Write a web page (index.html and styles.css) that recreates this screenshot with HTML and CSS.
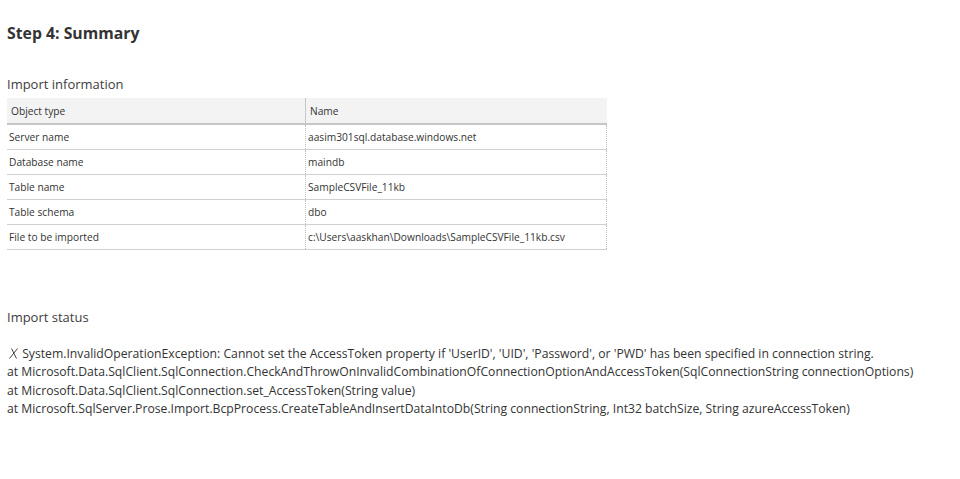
FILE: index.html
```html
<!DOCTYPE html>
<html>
<head>
<meta charset="utf-8">
<link rel="stylesheet" href="styles.css">
</head>
<body>
<div class="page">
  <h1 class="title">Step 4: Summary</h1>
  <h2 class="section">Import information</h2>
  <table class="info">
    <thead>
      <tr><th>Object type</th><th>Name</th></tr>
    </thead>
    <tbody>
      <tr><td>Server name</td><td>aasim301sql.database.windows.net</td></tr>
      <tr><td>Database name</td><td>maindb</td></tr>
      <tr><td>Table name</td><td>SampleCSVFile_11kb</td></tr>
      <tr><td>Table schema</td><td>dbo</td></tr>
      <tr><td>File to be imported</td><td>c:\Users\aaskhan\Downloads\SampleCSVFile_11kb.csv</td></tr>
    </tbody>
  </table>
  <h2 class="section status-title">Import status</h2>
  <div class="status">
    <div><svg class="x" width="11" height="11" viewBox="0 0 11 11"><path d="M3.5 0.5 L8.5 10.5 M9.5 0.5 L1.5 10.5" stroke="#444" stroke-width="1" fill="none"/></svg> System.InvalidOperationException: Cannot set the AccessToken property if 'UserID', 'UID', 'Password', or 'PWD' has been specified in connection string.</div>
    <div>at Microsoft.Data.SqlClient.SqlConnection.CheckAndThrowOnInvalidCombinationOfConnectionOptionAndAccessToken(SqlConnectionString connectionOptions)</div>
    <div>at Microsoft.Data.SqlClient.SqlConnection.set_AccessToken(String value)</div>
    <div>at Microsoft.SqlServer.Prose.Import.BcpProcess.CreateTableAndInsertDataIntoDb(String connectionString, Int32 batchSize, String azureAccessToken)</div>
  </div>
</div>
</body>
</html>
```

FILE: styles.css
```css
html, body {
  margin: 0;
  padding: 0;
  background: #ffffff;
}
body {
  font-family: "Open Sans", "Noto Sans", "Liberation Sans", sans-serif;
  color: #333333;
}
.page {
  padding: 22px 7px 0 7px;
}
.title {
  margin: 0;
  font-size: 15.8px;
  font-weight: 700;
  line-height: 22px;
  color: #333333;
}
.section {
  margin: 31px 0 0 0;
  font-size: 13px;
  font-weight: 400;
  line-height: 18px;
  color: #3d3d3d;
}
.info {
  margin-top: 5px;
  width: 600px;
  border-collapse: collapse;
  font-size: 10.2px;
  color: #333333;
  table-layout: fixed;
}
.info th {
  background: #f3f3f3;
  font-weight: 400;
  text-align: left;
  height: 25px;
  padding: 0 4px;
  border-bottom: 2px solid #c6c6c6;
}
.info th + th {
  border-left: 1px solid #c6c6c6;
}
.info td {
  height: 24px;
  padding: 0 2px;
  border-bottom: 1px solid #d0d0d0;
}
.info td + td {
  border-left: 1px dotted #c0c0c0;
  border-right: 1px dotted #c0c0c0;
}
.info th:first-child {
  width: 290px;
}
.status-title {
  margin-top: 58px;
}
.status {
  margin-top: 19px;
  font-size: 12.2px;
  line-height: 18.3px;
  color: #333333;
}
.x {
  vertical-align: -1px;
  margin-left: 1px;
}
```
